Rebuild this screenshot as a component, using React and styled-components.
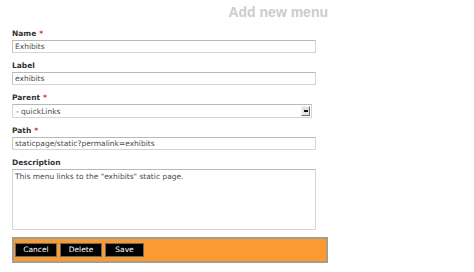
import styled, { createGlobalStyle } from 'styled-components';

const GlobalStyle = createGlobalStyle`
  html, body {
    margin: 0;
    padding: 0;
    background: #ffffff;
  }
  body {
    font-family: "DejaVu Sans", Verdana, sans-serif;
  }
`;

const Page = styled.div`
  width: 316px;
  padding: 3px 0 0 12px;
`;

const Title = styled.h1`
  margin: 0 0 8px;
  text-align: right;
  font-family: "Liberation Sans", Arial, sans-serif;
  font-size: 14px;
  line-height: 18px;
  font-weight: bold;
  color: #cccccc;
`;

const Field = styled.div`
  margin-bottom: ${({ $gap }) => $gap || 8}px;
`;

const Label = styled.label`
  display: block;
  height: 10px;
  margin-bottom: 1px;
  font-size: 7.5px;
  line-height: 10px;
  font-weight: bold;
  color: #333333;
`;

const Required = styled.span`
  color: #e0202a;
  margin-left: 3px;
`;

const TextInput = styled.input`
  display: block;
  box-sizing: border-box;
  width: 304px;
  height: 13px;
  margin: 0;
  padding: 0 2px;
  border: 1px solid #d4d4d4;
  border-top-color: #b8b8b8;
  border-left-color: #c4c4c4;
  font-family: inherit;
  font-size: 7.5px;
  color: #4a4a4a;
  background: #ffffff;
  outline: none;
`;

const SelectBox = styled.div`
  box-sizing: border-box;
  width: 300px;
  height: 14px;
  display: flex;
  align-items: center;
  justify-content: space-between;
  padding: 0 1px 0 3px;
  border: 1px solid #d4d4d4;
  border-top-color: #b8b8b8;
  font-size: 7.5px;
  color: #4a4a4a;
`;

const SelectArrow = styled.span`
  box-sizing: border-box;
  width: 9px;
  height: 10px;
  display: flex;
  align-items: center;
  justify-content: center;
  background: #e4e4e4;
  border: 1px solid;
  border-color: #f4f4f4 #707070 #707070 #f4f4f4;

  &::after {
    content: '';
    width: 4px;
    height: 2px;
    background: #111111;
  }
`;

const TextArea = styled.textarea`
  display: block;
  box-sizing: border-box;
  width: 304px;
  height: 61px;
  margin: 0;
  padding: 2px 2px;
  resize: none;
  border: 1px solid #d4d4d4;
  border-top-color: #b8b8b8;
  font-family: inherit;
  font-size: 7.5px;
  line-height: 10px;
  color: #4a4a4a;
  outline: none;
`;

const ButtonBar = styled.div`
  box-sizing: border-box;
  width: 316px;
  height: 26px;
  display: flex;
  align-items: center;
  gap: 3px;
  padding: 0 1px;
  background: #fb9a31;
  border: 2px solid #a89c8c;
`;

const Button = styled.button`
  box-sizing: border-box;
  width: ${({ $w }) => $w}px;
  height: 14px;
  padding: 0;
  background: #000000;
  color: #ffffff;
  border: 1px solid #6a6a6a;
  font-family: inherit;
  font-size: 7.5px;
  line-height: 12px;
  cursor: pointer;
`;

export default function App() {
  return (
    <>
      <GlobalStyle />
      <Page>
        <Title>Add new menu</Title>

        <Field>
          <Label>
            Name<Required>*</Required>
          </Label>
          <TextInput defaultValue="Exhibits" />
        </Field>

        <Field>
          <Label>Label</Label>
          <TextInput defaultValue="exhibits" />
        </Field>

        <Field>
          <Label>
            Parent<Required>*</Required>
          </Label>
          <SelectBox>
            <span>- quickLinks</span>
            <SelectArrow />
          </SelectBox>
        </Field>

        <Field>
          <Label>
            Path<Required>*</Required>
          </Label>
          <TextInput defaultValue="staticpage/static?permalink=exhibits" />
        </Field>

        <Field $gap={7}>
          <Label>Description</Label>
          <TextArea defaultValue={'This menu links to the "exhibits" static page.'} />
        </Field>

        <ButtonBar>
          <Button $w={42}>Cancel</Button>
          <Button $w={42}>Delete</Button>
          <Button $w={39}>Save</Button>
        </ButtonBar>
      </Page>
    </>
  );
}
